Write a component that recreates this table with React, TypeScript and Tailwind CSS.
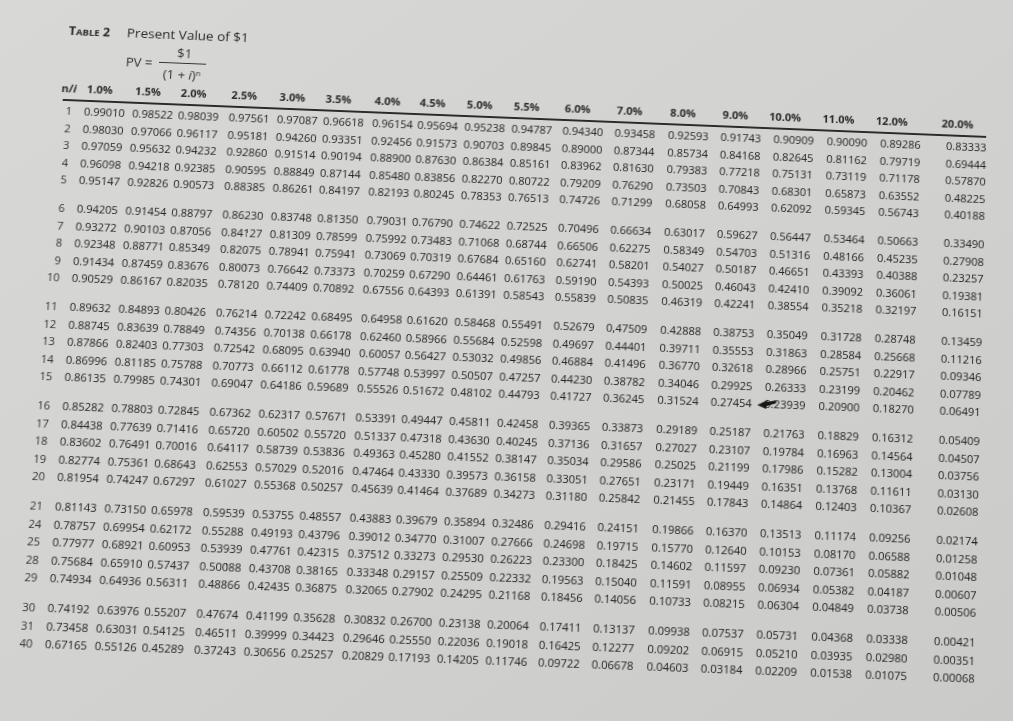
import React from "react";

// Interest rates across the top, in the order the book prints them
const RATES = [1.0, 1.5, 2.0, 2.5, 3.0, 3.5, 4.0, 4.5, 5.0, 5.5, 6.0, 7.0, 8.0, 9.0, 10.0, 11.0, 12.0, 20.0];

// Periods, grouped in the blocks of the printed table
const BLOCKS = [
  [1, 2, 3, 4, 5],
  [6, 7, 8, 9, 10],
  [11, 12, 13, 14, 15],
  [16, 17, 18, 19, 20],
  [21, 24, 25, 28, 29],
  [30, 31, 40],
];

// label column + one column per rate (widths follow the printed page)
const GRID =
  "grid grid-cols-[40px_48px_45.5px_50.5px_48px_46px_49px_45px_47px_47px_51px_52px_53.5px_52.5px_53px_53.5px_53.5px_66px_50px]";

// misprints that show on the photographed page
const PRINTED: Record<string, string> = { "11-7": "0,47509" };

const pv = (rate: number, n: number) => {
  const key = `${n}-${rate}`;
  if (PRINTED[key]) return PRINTED[key];
  return (Math.round(1e5 / Math.pow(1 + rate / 100, n)) / 1e5).toFixed(5);
};

// --- page warp: the photo is a tilted page, map the flat table onto it ---
function solve(A: number[][], b: number[]) {
  const n = b.length;
  const m = A.map((row, i) => [...row, b[i]]);
  for (let c = 0; c < n; c++) {
    let p = c;
    for (let r = c + 1; r < n; r++) if (Math.abs(m[r][c]) > Math.abs(m[p][c])) p = r;
    [m[c], m[p]] = [m[p], m[c]];
    for (let r = 0; r < n; r++) {
      if (r === c) continue;
      const f = m[r][c] / m[c][c];
      for (let k = c; k <= n; k++) m[r][k] -= f * m[c][k];
    }
  }
  return m.map((row, i) => row[n] / row[i]);
}

function warp(src: number[][], dst: number[][]) {
  const A: number[][] = [];
  const b: number[] = [];
  for (let i = 0; i < 4; i++) {
    const [x, y] = src[i];
    const [u, v] = dst[i];
    A.push([x, y, 1, 0, 0, 0, -x * u, -y * u]);
    b.push(u);
    A.push([0, 0, 0, x, y, 1, -x * v, -y * v]);
    b.push(v);
  }
  const [a, bb, c, d, e, f, g, h] = solve(A, b);
  return `matrix3d(${a},${d},0,${g},${bb},${e},0,${h},0,0,1,0,${c},${f},0,1)`;
}

// flat anchors (row 1 / row 40, first and last column) -> where they sit in the photo
const PAGE = warp(
  [[85, 112], [946, 112], [85, 642], [946, 642]],
  [[84, 111.5], [946, 146], [45, 644], [933, 677]],
);

function Arrow() {
  return (
    <svg
      className="absolute left-[-7px] top-1/2 -translate-y-1/2"
      width="19"
      height="11"
      viewBox="0 0 19 11"
    >
      <polygon points="0,7 10,1.5 9,10.5" fill="#161616" />
      <polygon points="8,4 18.5,1.5 18.5,4.5 8,8" fill="#161616" />
    </svg>
  );
}

export default function App() {
  return (
    <div className="relative h-[721px] w-[1013px] overflow-hidden bg-linear-to-br from-[#d8d8d6] via-[#d2d2d0] to-[#cacac8]">
      <div
        className="flex h-[721px] w-[1013px] origin-top-left flex-col font-['Open_Sans',sans-serif] text-[#222]"
        style={{ transform: PAGE }}
      >
        {/* Title */}
        <div className="ml-[64px] mt-[19px] flex h-[20px] items-baseline">
          <span className="w-[58px] text-[12.5px] font-bold text-[#2a2a2a]">
            T<span className="text-[9.5px]">ABLE</span> 2
          </span>
          <span className="text-[13.5px] font-medium text-[#2a2a2a]">Present Value of $1</span>
        </div>

        {/* Formula */}
        <div className="ml-[123px] flex h-[40.75px] items-center text-[13px] text-[#333]">
          <span className="w-[33px]">PV =</span>
          <div className="flex w-[47px] flex-col items-center">
            <span className="h-[13px] pl-[3px] leading-[13px]">$1</span>
            <div className="mt-[3.5px] h-px w-[47px] bg-[#333]" />
            <span className="mt-[4.5px] h-[13px] leading-[13px]">
              (1 + <i>i</i>)<sup className="text-[8px]">n</sup>
            </span>
          </div>
        </div>

        {/* Column heads */}
        <div className={`${GRID} ml-[45px] h-[17.5px] items-center text-[11px] font-bold leading-[17.5px] text-[#2a2a2a]`}>
          <div className="flex justify-end pr-[9px]">
            n/<i>i</i>
          </div>
          {RATES.map((r) => (
            <div key={r} className="flex w-[27px] justify-end whitespace-nowrap">
              {r.toFixed(1)}%
            </div>
          ))}
        </div>
        <div className="ml-[63px] mt-[2.75px] h-[1.5px] w-[923px] bg-[#2a2a2a]" />

        {/* Body */}
        <div className="ml-[45px] mt-[1.5px] flex flex-col text-[11px] font-medium leading-[17.5px]">
          {BLOCKS.map((block, bi) => (
            <div key={bi} className={bi === 0 ? "" : "mt-[11.5px]"}>
              {block.map((n) => (
                <div key={n} className={`${GRID} h-[17.5px]`}>
                  <div className="pr-[12px] text-right text-[#333]">{n}</div>
                  {RATES.map((r) => (
                    <div key={r} className="relative whitespace-nowrap">
                      {pv(r, n)}
                      {n === 15 && r === 10 && <Arrow />}
                    </div>
                  ))}
                </div>
              ))}
            </div>
          ))}
        </div>
      </div>
    </div>
  );
}
